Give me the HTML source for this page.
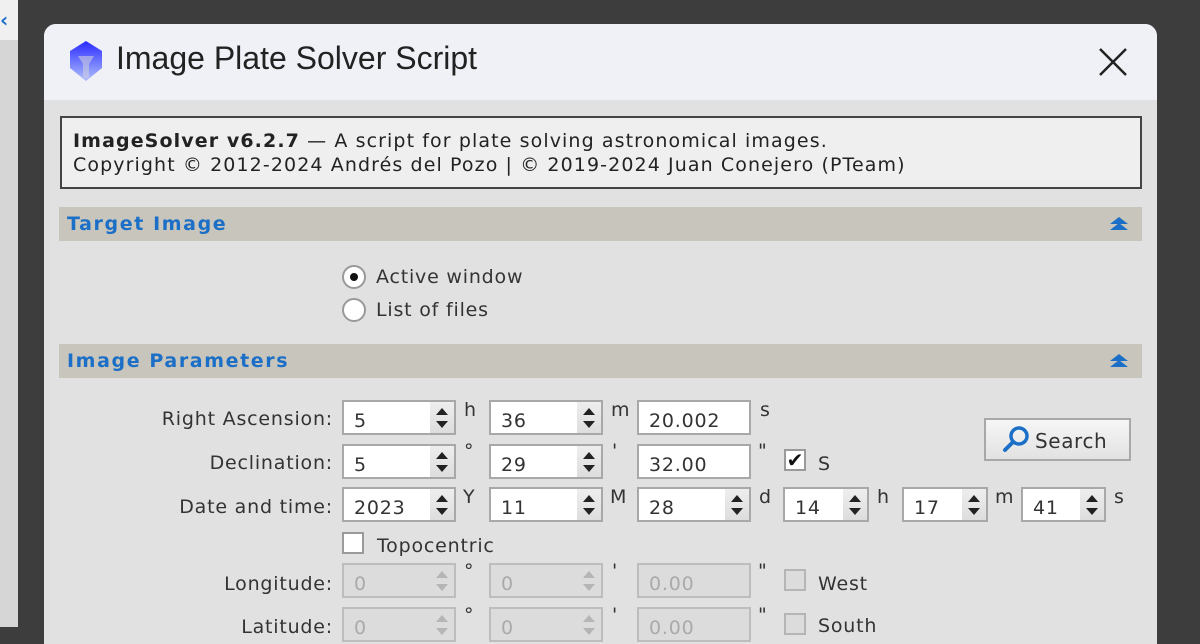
<!DOCTYPE html>
<html><head><meta charset="utf-8"><style>
*{margin:0;padding:0;box-sizing:border-box}
body{width:1200px;height:627px;overflow:hidden;background:#3d3d3d;position:relative;font-family:"DejaVu Sans","Liberation Sans",sans-serif;color:#333}
.a{position:absolute}
.dlg{left:44px;top:24px;width:1113px;height:620px;background:#e1e1e1;border-radius:12px 12px 0 0;overflow:hidden}
.tb{left:0;top:0;width:1113px;height:76px;background:#eff1f6}
.sp{position:absolute;height:35px;border:2px solid #a8a8a8;background:#fff;font-size:19px;padding:8px 0 0 10px;color:#333;letter-spacing:.8px}
.sp .btn{position:absolute;right:0;top:0;width:24px;height:31px;background:linear-gradient(#eee,#ddd)}
.sp .btn:before{content:"";position:absolute;left:6px;top:6px;border:6px solid transparent;border-bottom:7px solid #222;border-top:0}
.sp .btn:after{content:"";position:absolute;left:6px;top:19px;border:6px solid transparent;border-top:7px solid #222;border-bottom:0}
.dis{background:#dcdcdc;color:#aaa;border-color:#bdbdbd}
.dis .btn{background:#dcdcdc}
.dis .btn:before{border-bottom-color:#b5b5b5}.dis .btn:after{border-top-color:#b5b5b5}
.u{position:absolute;font-size:19px;color:#333;letter-spacing:.8px}
.lb{position:absolute;right:867px;font-size:19px;color:#333;text-align:right;white-space:nowrap;letter-spacing:.8px}
.hd{position:absolute;left:59px;width:1083px;height:34px;background:#c8c5bd;color:#1c6fc6;font-weight:bold;font-size:19px;padding:6px 0 0 8px;letter-spacing:1.6px}
.hd i{position:absolute;right:14px;top:10px;width:0;height:0;border:9px solid transparent;border-bottom:7px solid #1c6fc6;border-top:0}
.hd i:after{content:"";position:absolute;left:-9px;top:6px;border:9px solid transparent;border-bottom:7px solid #1c6fc6;border-top:0}
.cb{position:absolute;width:22px;height:22px;border:2px solid #9a9a9a;background:#fff}
</style></head><body>
<div class="a" style="left:0;top:0;width:18px;height:627px;background:#d6d6d6"></div>
<div class="a" style="left:0;top:0;width:18px;height:40px;background:#f0f0f0;color:#1c6fc6;font-size:20px;font-weight:bold;line-height:40px">&#x2039;</div>
<div class="a dlg">
 <div class="a tb"></div>
 <svg class="a" style="left:24px;top:16px" width="36" height="42" viewBox="0 0 36 42"><defs><linearGradient id="g" x1="0" y1="0" x2="0" y2="1"><stop offset="0" stop-color="#2a2aff"/><stop offset="1" stop-color="#b0c0ff"/></linearGradient></defs><path d="M18 1 L34 11 L34 28 L18 41 L2 28 L2 11Z" fill="url(#g)"/><path d="M10 16 L26 16 L21 24 L21 38 L15 38 L15 24Z" fill="#ccd" opacity=".6"/></svg>
 <div class="a" style="left:72px;top:16px;font-size:32px;color:#222;font-family:'Liberation Sans',sans-serif">Image Plate Solver Script</div>
 <svg class="a" style="left:1053px;top:22px" width="32" height="32"><path d="M3 3 L29 29 M29 3 L3 29" stroke="#222" stroke-width="2.5"/></svg>
</div>
<div class="a" style="left:60px;top:116px;width:1082px;height:73px;border:2px solid #444;background:#efefef;font-size:19px;color:#222;padding:11px 0 0 11px;line-height:24px;letter-spacing:1.1px;white-space:nowrap"><b>ImageSolver v6.2.7</b> — A script for plate solving astronomical images.<br>Copyright © 2012-2024 Andrés del Pozo | © 2019-2024 Juan Conejero (PTeam)</div>
<div class="hd" style="top:207px">Target Image<i></i></div>
<div class="a" style="left:342px;top:265px;width:24px;height:24px;border-radius:50%;border:2px solid #999;background:#fff"><div class="a" style="left:6px;top:6px;width:8px;height:8px;border-radius:50%;background:#111"></div></div>
<div class="u" style="left:376px;top:266px">Active window</div>
<div class="a" style="left:342px;top:298px;width:24px;height:24px;border-radius:50%;border:2px solid #999;background:#fff"></div>
<div class="u" style="left:376px;top:299px">List of files</div>
<div class="hd" style="top:344px">Image Parameters<i></i></div>

<div class="lb" style="top:408px">Right Ascension:</div>
<div class="sp" style="left:342px;top:400px;width:114px">5<div class="btn"></div></div>
<div class="u" style="left:464px;top:399px">h</div>
<div class="sp" style="left:489px;top:400px;width:114px">36<div class="btn"></div></div>
<div class="u" style="left:611px;top:399px">m</div>
<div class="sp" style="left:637px;top:400px;width:114px">20.002</div>
<div class="u" style="left:760px;top:399px">s</div>

<div class="lb" style="top:452px">Declination:</div>
<div class="sp" style="left:342px;top:444px;width:114px">5<div class="btn"></div></div>
<div class="u" style="left:464px;top:440px">°</div>
<div class="sp" style="left:489px;top:444px;width:114px">29<div class="btn"></div></div>
<div class="u" style="left:612px;top:440px">'</div>
<div class="sp" style="left:637px;top:444px;width:114px">32.00</div>
<div class="u" style="left:758px;top:440px">"</div>
<div class="cb" style="left:784px;top:449px;font-size:20px;line-height:18px;text-align:center;color:#111;font-weight:bold">✔</div>
<div class="u" style="left:818px;top:453px">S</div>

<div class="a" style="left:984px;top:418px;width:147px;height:43px;border:2px solid #a8a8a8;background:linear-gradient(#f6f6f6,#e2e2e2);font-size:20px;padding:9px 0 0 49px;color:#333;letter-spacing:.6px">Search</div>
<svg class="a" style="left:1000px;top:424px" width="34" height="30"><circle cx="19" cy="12" r="8" fill="none" stroke="#1c6fc6" stroke-width="3.5"/><path d="M13 18 L5 26" stroke="#1c6fc6" stroke-width="4" stroke-linecap="round"/></svg>

<div class="lb" style="top:496px">Date and time:</div>
<div class="sp" style="left:342px;top:487px;width:114px">2023<div class="btn"></div></div>
<div class="u" style="left:463px;top:486px">Y</div>
<div class="sp" style="left:489px;top:487px;width:114px">11<div class="btn"></div></div>
<div class="u" style="left:610px;top:486px">M</div>
<div class="sp" style="left:637px;top:487px;width:114px">28<div class="btn"></div></div>
<div class="u" style="left:759px;top:486px">d</div>
<div class="sp" style="left:783px;top:487px;width:86px">14<div class="btn"></div></div>
<div class="u" style="left:877px;top:486px">h</div>
<div class="sp" style="left:902px;top:487px;width:86px">17<div class="btn"></div></div>
<div class="u" style="left:995px;top:486px">m</div>
<div class="sp" style="left:1021px;top:487px;width:85px">41<div class="btn"></div></div>
<div class="u" style="left:1114px;top:486px">s</div>

<div class="cb" style="left:342px;top:532px"></div>
<div class="u" style="left:377px;top:535px">Topocentric</div>

<div class="lb" style="top:573px">Longitude:</div>
<div class="sp dis" style="left:342px;top:563px;width:114px">0<div class="btn"></div></div>
<div class="u" style="left:464px;top:560px">°</div>
<div class="sp dis" style="left:489px;top:563px;width:114px">0<div class="btn"></div></div>
<div class="u" style="left:612px;top:560px">'</div>
<div class="sp dis" style="left:637px;top:563px;width:114px">0.00</div>
<div class="u" style="left:758px;top:560px">"</div>
<div class="cb" style="left:784px;top:569px;background:#dcdcdc;border-color:#b5b5b5"></div>
<div class="u" style="left:818px;top:573px">West</div>

<div class="lb" style="top:616px">Latitude:</div>
<div class="sp dis" style="left:342px;top:607px;width:114px">0<div class="btn"></div></div>
<div class="u" style="left:464px;top:604px">°</div>
<div class="sp dis" style="left:489px;top:607px;width:114px">0<div class="btn"></div></div>
<div class="u" style="left:612px;top:604px">'</div>
<div class="sp dis" style="left:637px;top:607px;width:114px">0.00</div>
<div class="u" style="left:758px;top:604px">"</div>
<div class="cb" style="left:784px;top:613px;background:#dcdcdc;border-color:#b5b5b5"></div>
<div class="u" style="left:818px;top:615px">South</div>
</body></html>
